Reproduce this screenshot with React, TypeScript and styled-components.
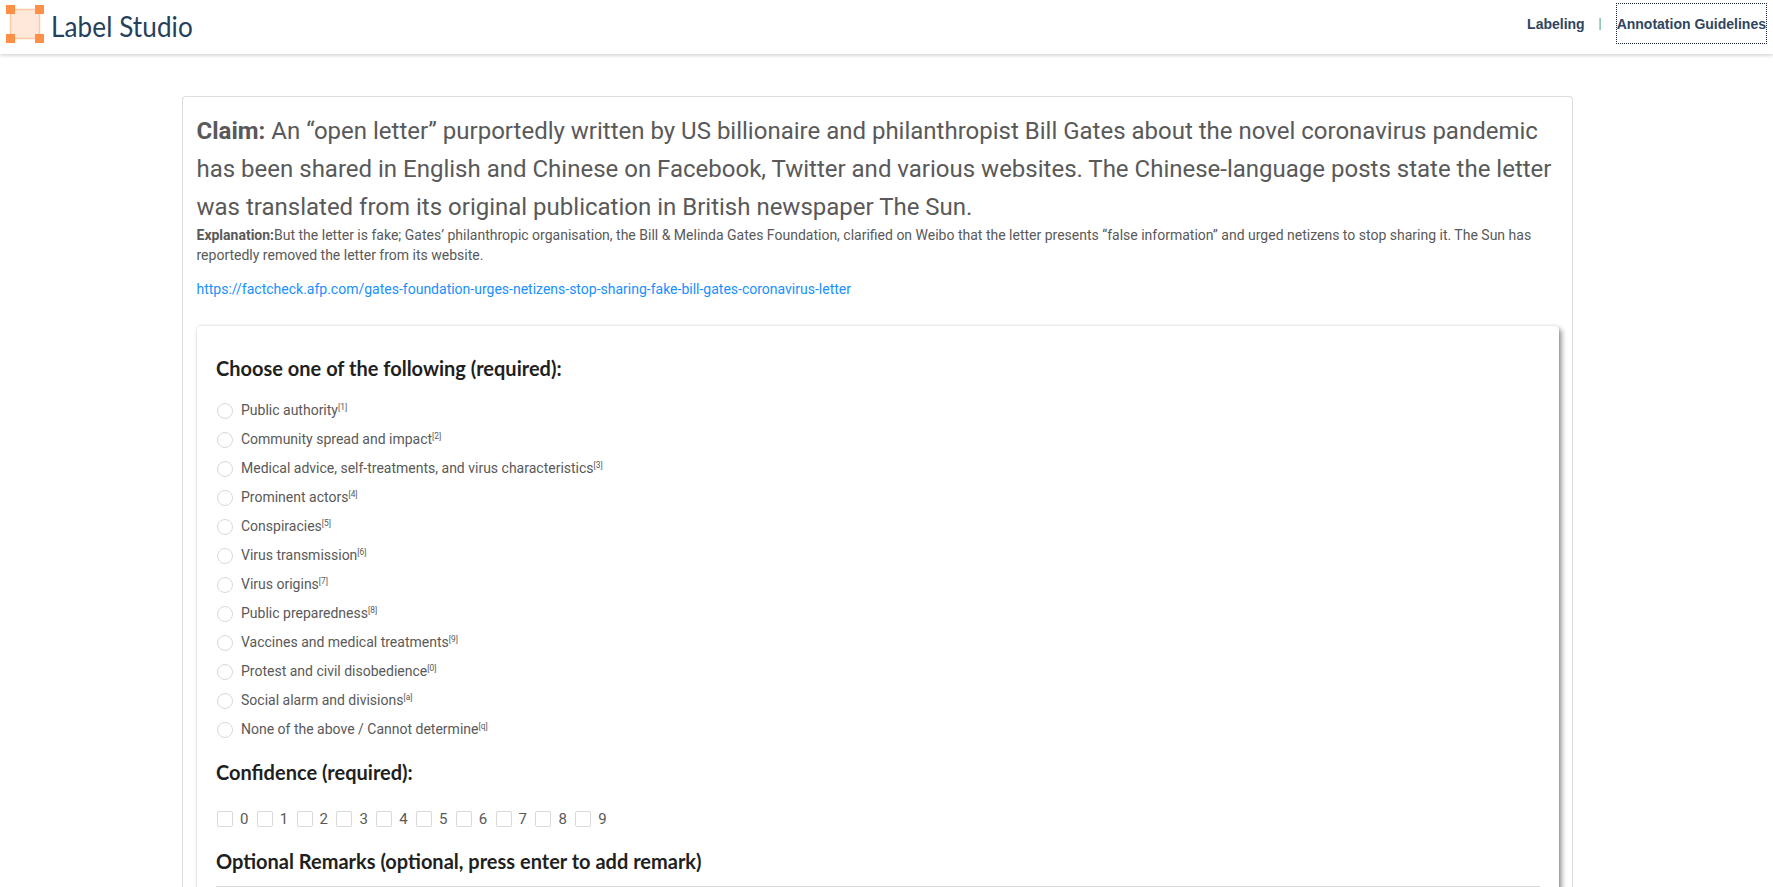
import React from "react";
import styled, { createGlobalStyle } from "styled-components";

const Global = createGlobalStyle`
  html, body { margin: 0; padding: 0; height: 887px; overflow: hidden; background: #fff; }
  body { font-family: Roboto, "Liberation Sans", sans-serif; color: #595959; }
  * { box-sizing: border-box; }
`;

const Header = styled.header`
  height: 54px;
  display: flex;
  align-items: flex-start;
  justify-content: space-between;
  box-shadow: 0 1px 4px rgba(0, 0, 0, 0.22);
  background: #fff;
`;
const Brand = styled.div`
  display: flex;
  align-items: center;
  height: 48px;
  padding-left: 6px;
  gap: 7px;
`;
const BrandName = styled.span`
  font-family: Lato, "Noto Sans", sans-serif;
  font-size: 29px;
  line-height: 1;
  margin-top: 3px;
  color: #26405c;
  letter-spacing: 0.1px;
  font-weight: 400;
  transform: scaleX(0.9);
  transform-origin: left center;
`;
const Nav = styled.nav`
  display: flex;
  align-items: center;
  height: 41px;
  margin-top: 3px;
  margin-right: 6px;
  font-family: "Liberation Sans", Arial, sans-serif;
  font-weight: 700;
  font-size: 14px;
  color: #2f4560;
`;
const NavSep = styled.span`
  width: 2px;
  height: 12px;
  background: linear-gradient(90deg, #e6d77e, #6fc5c9);
  margin: 1px 15px 0 14px;
`;
const NavActive = styled.a`
  height: 41px;
  padding: 0 1px;
  display: flex;
  align-items: center;
  outline: 1px dotted #1a2a3a;
  outline-offset: -1px;
`;
const Main = styled.main`
  padding: 42px 200px 0 182px;
`;
const Panel = styled.section`
  border: 1px solid #ddd;
  border-bottom: 0;
  border-radius: 4px 4px 0 0;
  padding: 15px 13px 0 13.5px;
`;
const Claim = styled.div`
  font-size: 24px;
  line-height: 38px;
`;
const Explanation = styled.div`
  font-size: 14px;
  line-height: 20px;
  margin-top: -1px;
`;
const Source = styled.a`
  display: block;
  margin-top: 14px;
  font-size: 14px;
  line-height: 20px;
  color: #1890ff;
`;
const FormCard = styled.div`
  margin: 27px 0 0 0.5px;
  height: 700px;
  border-radius: 4px;
  padding: 28px 19px;
  box-shadow: 3px 3px 5px rgba(0, 0, 0, 0.38), 0 0 3px rgba(0, 0, 0, 0.16);
`;
const Heading = styled.h2<{ $gap?: number }>`
  margin: ${(p) => p.$gap ?? 0}px 0 0;
  font-family: Lato, sans-serif;
  font-weight: 700;
  font-size: 20px;
  line-height: 28px;
  color: #1f1f1f;
`;
const RadioList = styled.div`
  margin-top: 13px;
  padding-left: 1px;
  display: flex;
  flex-direction: column;
`;
const RadioRow = styled.label`
  display: flex;
  align-items: center;
  height: 29px;
  font-size: 14px;
`;
const RadioDot = styled.span`
  width: 16px;
  height: 16px;
  border: 1px solid #d9d9d9;
  border-radius: 50%;
  margin-right: 8px;
  margin-top: 3px;
`;
const Key = styled.sup`
  font-size: 8.4px;
  line-height: 0;
  position: relative;
  top: -4.5px;
  vertical-align: baseline;
`;
const NumRow = styled.div`
  display: flex;
  align-items: center;
  margin-top: 24px;
  margin-bottom: 19px;
  padding-left: 1px;
`;
const NumItem = styled.label`
  display: flex;
  align-items: center;
  width: 39.8px;
  font-size: 15px;
`;
const Box = styled.span`
  width: 16px;
  height: 16px;
  border: 1px solid #d9d9d9;
  border-radius: 2px;
  margin-right: 7px;
`;
const RemarkInput = styled.div`
  margin-top: 11px;
  height: 32px;
  border-top: 1px solid #d9d9d9;
`;

const Logo = () => (
  <svg width="38" height="38" viewBox="0 0 38 38" aria-hidden="true">
    <rect x="4.5" y="4.5" width="29" height="29" fill="#ffe8da" stroke="#ffc9a6" strokeWidth="1.5" />
    <rect x="0" y="0" width="9" height="9" fill="#ff8f45" />
    <rect x="29" y="0" width="9" height="9" fill="#ff8f45" />
    <rect x="0" y="29" width="9" height="9" fill="#ff8f45" />
    <rect x="29" y="29" width="9" height="9" fill="#ff8f45" />
  </svg>
);

const options: [string, string][] = [
  ["Public authority", "1"],
  ["Community spread and impact", "2"],
  ["Medical advice, self-treatments, and virus characteristics", "3"],
  ["Prominent actors", "4"],
  ["Conspiracies", "5"],
  ["Virus transmission", "6"],
  ["Virus origins", "7"],
  ["Public preparedness", "8"],
  ["Vaccines and medical treatments", "9"],
  ["Protest and civil disobedience", "0"],
  ["Social alarm and divisions", "a"],
  ["None of the above / Cannot determine", "q"],
];

export default function App() {
  return (
    <>
      <Global />
      <Header>
        <Brand>
          <Logo />
          <BrandName>Label Studio</BrandName>
        </Brand>
        <Nav>
          <span>Labeling</span>
          <NavSep />
          <NavActive>Annotation Guidelines</NavActive>
        </Nav>
      </Header>
      <Main>
        <Panel>
          <Claim>
            <b>Claim:</b> An “open letter” purportedly written by US billionaire and philanthropist Bill Gates about the novel coronavirus pandemic has been shared in English and Chinese on Facebook, Twitter and various websites. The Chinese-language posts state the letter was translated from its original publication in British newspaper The Sun.
          </Claim>
          <Explanation>
            <b>Explanation:</b>But the letter is fake; Gates’ philanthropic organisation, the Bill &amp; Melinda Gates Foundation, clarified on Weibo that the letter presents “false information” and urged netizens to stop sharing it. The Sun has reportedly removed the letter from its website.
          </Explanation>
          <Source>https://factcheck.afp.com/gates-foundation-urges-netizens-stop-sharing-fake-bill-gates-coronavirus-letter</Source>
          <FormCard>
            <Heading>Choose one of the following (required):</Heading>
            <RadioList>
              {options.map(([label, key]) => (
                <RadioRow key={label}>
                  <RadioDot />
                  <span>
                    {label}
                    <Key>[{key}]</Key>
                  </span>
                </RadioRow>
              ))}
            </RadioList>
            <Heading $gap={15}>Confidence (required):</Heading>
            <NumRow>
              {[0, 1, 2, 3, 4, 5, 6, 7, 8, 9].map((n) => (
                <NumItem key={n}>
                  <Box />
                  {n}
                </NumItem>
              ))}
            </NumRow>
            <Heading>Optional Remarks (optional, press enter to add remark)</Heading>
            <RemarkInput />
          </FormCard>
        </Panel>
      </Main>
    </>
  );
}
